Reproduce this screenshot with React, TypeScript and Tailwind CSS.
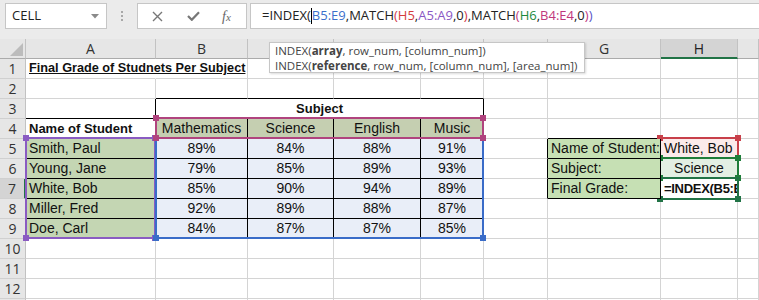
import React from 'react'
import clsx from 'clsx'

const students = [
  { name: 'Smith, Paul', grades: [89, 84, 88, 91] },
  { name: 'Young, Jane', grades: [79, 85, 89, 93] },
  { name: 'White, Bob', grades: [85, 90, 94, 89] },
  { name: 'Miller, Fred', grades: [92, 89, 88, 87] },
  { name: 'Doe, Carl', grades: [84, 87, 87, 85] },
]

const subjects = ['Mathematics', 'Science', 'English', 'Music']
const letters = ['A', 'B', 'C', 'D', 'E', 'F', 'G', 'H', '']

type Side = 'g' | 'k' | 't'

function Cell({
  children,
  className,
  size = 'text-[14px]',
  r = 'g',
  b = 'g',
}: {
  children?: React.ReactNode
  className?: string
  size?: string
  r?: Side
  b?: Side
}) {
  return (
    <div
      className={clsx(
        'flex items-center whitespace-nowrap border-r border-b px-[3px] text-[#111]',
        size,
        r === 'k' && 'border-r-black',
        r === 'g' && 'border-r-[#d4d4d4]',
        r === 't' && 'border-r-transparent',
        b === 'k' && 'border-b-black',
        b === 'g' && 'border-b-[#d4d4d4]',
        b === 't' && 'border-b-transparent',
        className,
      )}
    >
      {children}
    </div>
  )
}

function RowHeader({ n }: { n: number }) {
  const active = n === 7
  return (
    <div
      className={clsx(
        "flex items-center justify-center border-b border-b-[#d0d0d0] font-['Open_Sans',sans-serif] text-[14px] text-[#333]",
        active ? 'border-r-2 border-r-[#217346] bg-[#d4d4d4]' : 'border-r border-r-[#c2c2c2] bg-[#e6e6e6]',
      )}
    >
      {n < 13 ? n : ''}
    </div>
  )
}

function Toolbar() {
  return (
    <div className="flex h-[39px] items-start bg-[#ebebeb] pt-[3px] font-['Open_Sans',sans-serif]">
      {/* name box */}
      <div className="ml-[5px] flex h-[26px] w-[102px] items-center justify-between border border-[#c6c6c6] bg-white pr-[7px] pl-[6px]">
        <span className="text-[13px] text-[#222]">CELL</span>
        <svg width="8" height="5" viewBox="0 0 8 5">
          <path d="M0 0h8L4 4.5z" fill="#8a8a8a" />
        </svg>
      </div>
      <div className="flex h-[26px] w-[30px] flex-col items-center justify-center gap-[2px]">
        <div className="h-[2px] w-[2px] bg-[#a8a8a8]" />
        <div className="h-[2px] w-[2px] bg-[#a8a8a8]" />
        <div className="h-[2px] w-[2px] bg-[#a8a8a8]" />
      </div>
      {/* cancel / enter / fx */}
      <div className="flex h-[26px] w-[110px] items-center border border-[#c6c6c6] bg-white">
        <svg className="ml-[14px]" width="11" height="11" viewBox="0 0 11 11">
          <path d="M1 1l9 9M10 1l-9 9" stroke="#777" strokeWidth="1.4" />
        </svg>
        <svg className="ml-[24px]" width="13" height="10" viewBox="0 0 13 10">
          <path d="M1 5l3.8 3.8L12 1.2" stroke="#777" strokeWidth="2.2" fill="none" />
        </svg>
        <span className="ml-[22px] font-['Liberation_Serif',serif] text-[14px] text-[#666] italic">
          f<span className="text-[11px]">x</span>
        </span>
      </div>
      {/* formula */}
      <div className="ml-[3px] flex h-[26px] flex-1 items-center whitespace-nowrap border border-r-0 border-[#c6c6c6] bg-white pl-[11px] text-[13px] text-[#222]">
        <span>=INDEX(</span>
        <span className="h-[16px] w-px bg-black" />
        <span className="text-[#3b6fcb]">B5:E9</span>
        <span>,MATCH</span>
        <span className="text-[#cf3a4a]">(</span>
        <span className="text-[#d43c3c]">H5</span>
        <span>,</span>
        <span className="text-[#8a58c4]">A5:A9</span>
        <span>,0</span>
        <span className="text-[#cf3a4a]">)</span>
        <span>,MATCH</span>
        <span className="text-[#c0387c]">(</span>
        <span className="text-[#1c8a3c]">H6</span>
        <span>,</span>
        <span className="text-[#c0387c]">B4:E4</span>
        <span>,0</span>
        <span className="text-[#c0387c]">)</span>
        <span className="text-[#5a55c8]">)</span>
      </div>
    </div>
  )
}

function Handles({ color, top = true }: { color: string; top?: boolean }) {
  return (
    <>
      {top && <div className={clsx('absolute -top-[4px] -left-[4px] h-[6px] w-[6px]', color)} />}
      {top && <div className={clsx('absolute -top-[4px] -right-[4px] h-[6px] w-[6px]', color)} />}
      <div className={clsx('absolute -bottom-[4px] -left-[4px] h-[6px] w-[6px]', color)} />
      <div className={clsx('absolute -right-[4px] -bottom-[4px] h-[6px] w-[6px]', color)} />
    </>
  )
}

function Sheet() {
  const rows: React.ReactNode[] = []

  for (let r = 1; r <= 13; r++) {
    rows.push(<RowHeader key={`h${r}`} n={r} />)
    for (let c = 0; c < 9; c++) {
      const k = `${r}-${c}`
      if (r === 1 && c === 0) {
        rows.push(
          <Cell key={k} r="t" size="text-[12.7px]" className="z-[1] font-bold underline">
            Final Grade of Studnets Per Subject
          </Cell>,
        )
      } else if (r === 2 && c >= 1 && c <= 4) {
        rows.push(<Cell key={k} b="k" />)
      } else if (r === 3 && c === 0) {
        rows.push(<Cell key={k} r="k" b="k" />)
      } else if (r === 3 && c === 1) {
        rows.push(
          <div
            key={k}
            className="col-span-4 flex items-center justify-center border-r border-b border-r-black border-b-black text-[13px] font-bold text-[#111]"
          >
            Subject
          </div>,
        )
      } else if (r === 3 && c >= 2 && c <= 4) {
        continue
      } else if (r === 4 && c === 0) {
        rows.push(
          <Cell key={k} r="k" size="text-[13px]" className="font-bold">
            Name of Student
          </Cell>,
        )
      } else if (r === 4 && c >= 1 && c <= 4) {
        rows.push(
          <Cell key={k} r="k" b="k" className="justify-center bg-[#c5cfb1]">
            {subjects[c - 1]}
          </Cell>,
        )
      } else if (r === 4 && c === 6) {
        rows.push(<Cell key={k} b="k" />)
      } else if (r >= 5 && r <= 9 && c === 0) {
        rows.push(
          <Cell key={k} r="k" b="k" className="bg-[#c4d6b3]">
            {students[r - 5].name}
          </Cell>,
        )
      } else if (r >= 5 && r <= 9 && c >= 1 && c <= 4) {
        rows.push(
          <Cell key={k} r="k" b="k" className="justify-center bg-[#e9eef8]">
            {students[r - 5].grades[c - 1]}%
          </Cell>,
        )
      } else if (r >= 5 && r <= 7 && c === 5) {
        rows.push(<Cell key={k} r="k" />)
      } else if (r >= 5 && r <= 7 && c === 6) {
        rows.push(
          <Cell key={k} r="k" b="k" className="z-[1] bg-[#c6e0b4]">
            {r === 5 ? 'Name of Student:' : r === 6 ? 'Subject:' : 'Final Grade:'}
          </Cell>,
        )
      } else if (r === 5 && c === 7) {
        rows.push(
          <Cell key={k} className="overflow-hidden bg-[#fbeaea]">
            White, Bob
          </Cell>,
        )
      } else if (r === 6 && c === 7) {
        rows.push(
          <Cell key={k} className="justify-center bg-[#e3efe3]">
            Science
          </Cell>,
        )
      } else if (r === 7 && c === 7) {
        rows.push(
          <Cell key={k} size="text-[13px]" className="overflow-hidden font-bold tracking-[-0.3px]">
            =INDEX(B5:E9,MATCH(H5,A5:A9,0),MATCH(H6,B4:E4,0))
          </Cell>,
        )
      } else {
        rows.push(<Cell key={k} />)
      }
    }
  }

  return (
    <div className="relative grid auto-rows-[20px] grid-cols-[26px_130px_92px_86px_87px_63px_64px_113px_77px_1fr]">
      {/* column headers */}
      <div className="relative border-r border-b border-r-[#c2c2c2] border-b-[#ababab] bg-[#e6e6e6]">
        <svg className="absolute right-[2px] bottom-[2px]" width="13" height="13" viewBox="0 0 13 13">
          <path d="M13 0V13H0z" fill="#bcbcbc" />
        </svg>
      </div>
      {letters.map((l) =>
        l === 'H' ? (
          <div
            key={l}
            className="flex items-center justify-center border-r border-b-2 border-r-[#c2c2c2] border-b-[#217346] bg-[#d4d4d4] font-['Open_Sans',sans-serif] text-[14px] text-[#222]"
          >
            {l}
          </div>
        ) : (
          <div
            key={l || 'I'}
            className="flex items-center justify-center border-r border-b border-r-[#c2c2c2] border-b-[#ababab] bg-[#e6e6e6] font-['Open_Sans',sans-serif] text-[14px] text-[#333]"
          >
            {l}
          </div>
        ),
      )}
      {rows}

      {/* formula reference highlights */}
      <div className="absolute top-[98px] left-[25px] h-[102px] w-[131px] border-2 border-[#8a5bc2]">
        <Handles color="bg-[#8a5bc2]" />
      </div>
      <div className="absolute top-[98px] left-[155px] h-[102px] w-[329px] border-2 border-[#3a6cc8]">
        <Handles color="bg-[#3a6cc8]" />
      </div>
      <div className="absolute top-[78px] left-[155px] h-[22px] w-[329px] border-2 border-[#b0447e]">
        <Handles color="bg-[#b0447e]" />
      </div>
      <div className="absolute top-[98px] left-[659px] h-[22px] w-[80px] border-2 border-[#c8404a]">
        <Handles color="bg-[#c8404a]" />
      </div>
      <div className="absolute top-[118px] left-[659px] h-[22px] w-[80px] border-2 border-[#1f7d3a]">
        <Handles color="bg-[#1f7d3a]" />
      </div>
      <div className="absolute top-[138px] left-[659px] h-[23px] w-[80px] border-2 border-[#217346]">
        <Handles color="bg-[#217346]" top={false} />
      </div>
    </div>
  )
}

function Tooltip() {
  return (
    <div className="absolute top-[42px] left-[269px] h-[31px] w-[316px] whitespace-nowrap border border-[#c6c6c6] bg-white px-[5px] font-['Open_Sans',sans-serif] text-[11.5px] leading-[15px] text-[#444] shadow-[1px_1px_2px_rgba(0,0,0,0.15)]">
      <div>
        INDEX(<b>array</b>, row_num, [column_num])
      </div>
      <div>
        INDEX(<b>reference</b>, row_num, [column_num], [area_num])
      </div>
    </div>
  )
}

export default function App() {
  return (
    <div className="relative h-[300px] w-[759px] overflow-hidden bg-white font-['Liberation_Sans',Arial,sans-serif]">
      <Toolbar />
      <Sheet />
      <Tooltip />
    </div>
  )
}
